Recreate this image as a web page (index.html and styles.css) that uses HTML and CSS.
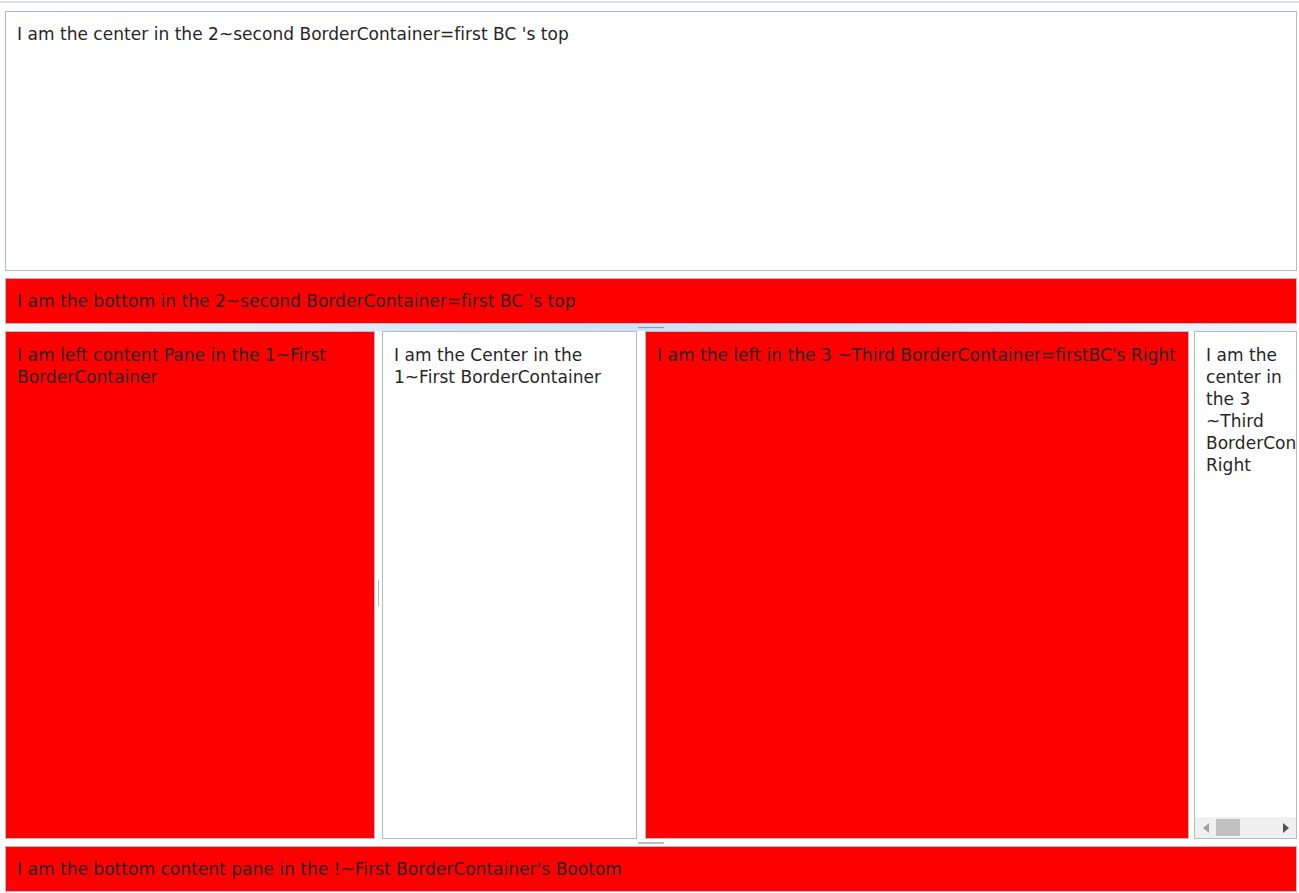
FILE: index.html
```html
<!DOCTYPE html>
<html>
<head>
<meta charset="utf-8">
<title>BorderContainer</title>
<link rel="stylesheet" href="styles.css">
</head>
<body>
<div class="topline"></div>
<div class="layout">
  <div class="pane top-center">I am the center in the 2~second BorderContainer=first BC 's top</div>
  <div class="pane bar red second-bottom">I am the bottom in the 2~second BorderContainer=first BC 's top</div>
  <div class="splitter-h hover"><span class="thumb-h"></span></div>
  <div class="row">
    <div class="pane red col-left">I am left content Pane in the 1~First BorderContainer</div>
    <div class="splitter-v"><span class="thumb-v"></span></div>
    <div class="pane col-center">I am the Center in the 1~First BorderContainer</div>
    <div class="gap-wide"></div>
    <div class="pane red col-third-left">I am the left in the 3 ~Third BorderContainer=firstBC's Right</div>
    <div class="gap-narrow"></div>
    <div class="pane col-third-center">
      <div class="scroll-area">I am the center in the 3 ~Third BorderContainer=firstBC's Right</div>
      <div class="hscroll">
        <span class="arrow arrow-left"></span>
        <span class="thumb"></span>
        <span class="track-fill"></span>
        <span class="arrow arrow-right"></span>
      </div>
    </div>
  </div>
  <div class="splitter-h"><span class="thumb-h"></span></div>
  <div class="pane bar red first-bottom">I am the bottom content pane in the !~First BorderContainer's Bootom</div>
</div>
</body>
</html>
```

FILE: styles.css
```css
html, body {
  margin: 0;
  padding: 0;
  background: #ffffff;
}

body {
  font-family: "DejaVu Sans", Verdana, sans-serif;
  font-size: 17px;
  line-height: 22px;
  letter-spacing: 0.03px;
  color: #262626;
  overflow: hidden;
}

.topline {
  height: 2px;
  margin-top: 1px;
  background: #dcdde2;
}

.layout {
  width: 1292px;
  padding: 8px 0 0 5px;
  display: flex;
  flex-direction: column;
}

.pane {
  box-sizing: border-box;
  border: 1px solid #b5bcc7;
  padding: 11px 11px 10px;
  background: #ffffff;
  overflow: hidden;
}

.red {
  background: #ff0000;
}

.top-center {
  height: 260px;
}

.second-bottom {
  height: 46px;
  margin-top: 7px;
}

.first-bottom {
  height: 46px;
}

.splitter-h {
  height: 7px;
  display: flex;
  align-items: center;
  justify-content: center;
}

.splitter-h .thumb-h {
  width: 26px;
  height: 2px;
  background: #b5bcc7;
}

.splitter-h.hover {
  background: linear-gradient(to right, #f3f7fd 0%, #d6e6f8 35%, #cfe2f7 50%, #d9e8f9 70%, #eef4fc 100%);
}

.splitter-h.hover .thumb-h {
  height: 1px;
  background: #7c9fc2;
  border-bottom: 1px solid #c4d7ec;
}

.row {
  height: 508px;
  display: flex;
}

.row .pane {
  flex: none;
  padding-top: 12px;
}

.col-left {
  width: 370px;
}

.splitter-v {
  flex: none;
  width: 7px;
  display: flex;
  flex-direction: column;
  align-items: center;
}

.splitter-v::before {
  content: "";
  flex: 0 0 49%;
}

.splitter-v .thumb-v {
  width: 1px;
  height: 26px;
  background: #b5bcc7;
}

.col-center {
  width: 255px;
}

.gap-wide {
  flex: none;
  width: 8px;
}

.col-third-left {
  width: 544px;
  padding-right: 2px;
}

.gap-narrow {
  flex: none;
  width: 5px;
}

.row .col-third-center {
  width: 103px;
  padding: 0;
  display: flex;
  flex-direction: column;
}

.scroll-area {
  flex: 1;
  min-height: 0;
  overflow: hidden;
  padding: 12px 6px 0 11px;
}

.hscroll {
  flex: none;
  height: 21px;
  background: #f0f0f0;
  display: flex;
  align-items: center;
}

.hscroll .arrow {
  flex: none;
  width: 21px;
  height: 21px;
  display: flex;
  align-items: center;
  justify-content: center;
  box-sizing: border-box;
}

.arrow-left::before {
  content: "";
  border-style: solid;
  border-width: 5px 6px 5px 0;
  border-color: transparent #a3a3a3 transparent transparent;
}

.arrow-right::before {
  content: "";
  border-style: solid;
  border-width: 5px 0 5px 6px;
  border-color: transparent transparent transparent #505050;
}

.hscroll .thumb {
  flex: none;
  width: 24px;
  height: 17px;
  background: #c1c1c1;
}

.hscroll .track-fill {
  flex: 1;
}
```
